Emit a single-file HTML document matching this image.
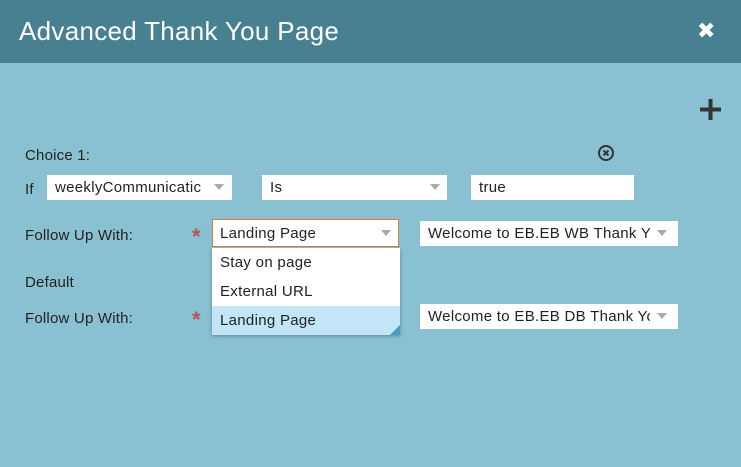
<!DOCTYPE html>
<html><head><style>
*{margin:0;padding:0;box-sizing:border-box}
body{width:741px;height:467px;background:#89c1d3;font-family:"Liberation Sans","DejaVu Sans",sans-serif;position:relative;overflow:hidden;color:#222}
.hdr{position:absolute;left:0;top:0;width:741px;height:63px;background:#478090}
.title{position:absolute;left:19px;top:16px;font-size:26px;color:#fff;letter-spacing:0.3px}
.x{position:absolute;left:697px;top:18px;color:#fff;font-size:22px;font-weight:bold}
.lbl{position:absolute;font-size:15px;color:#222;letter-spacing:0.2px}
.box{position:absolute;background:#fff;height:25px;font-size:15px;padding:4px 8px 0;white-space:nowrap;overflow:hidden;letter-spacing:0.3px}
.box span{display:block;overflow:hidden}
.arr{position:absolute;width:0;height:0;border-left:5px solid transparent;border-right:5px solid transparent;border-top:6px solid #aaa}
.star{position:absolute;color:#c0504d;font-size:22px;font-weight:bold}
.dd{position:absolute;left:212px;top:248px;width:188px;height:86px;background:#fff;box-shadow:0 2px 4px rgba(0,0,0,.3)}
.dd div{height:29px;padding:6px 8px 0;font-size:15px;letter-spacing:0.3px}
</style></head><body>
<div class="hdr"></div>
<div class="title">Advanced Thank You Page</div>
<div class="x">✖</div>
<svg style="position:absolute;left:700px;top:99px" width="21" height="21"><rect x="8.5" y="0" width="4" height="21" fill="#333"/><rect x="0" y="8.5" width="21" height="4" fill="#333"/></svg>
<div class="lbl" style="left:25px;top:147px">Choice 1:</div>
<svg style="position:absolute;left:597px;top:144px" width="18" height="18"><circle cx="9" cy="9" r="7" fill="none" stroke="#333" stroke-width="2"/><path d="M6.5 6.5L11.5 11.5M11.5 6.5L6.5 11.5" stroke="#333" stroke-width="2"/></svg>
<div class="lbl" style="left:25px;top:181px">If</div>
<div class="box" style="left:47px;top:175px;width:185px"><span style="width:153px">weeklyCommunicatic</span></div><div class="arr" style="left:214px;top:184px"></div>
<div class="box" style="left:262px;top:175px;width:185px">Is</div><div class="arr" style="left:430px;top:184px"></div>
<div class="box" style="left:471px;top:175px;width:163px">true</div>
<div class="lbl" style="left:25px;top:227px">Follow Up With:</div>
<div class="star" style="left:192px;top:224px">*</div>
<div class="box" style="left:212px;top:219px;width:187px;border:1px solid #e07b2a;padding:5px 7px 0;height:28px">Landing Page</div><div class="arr" style="left:381px;top:230px"></div>
<div class="box" style="left:420px;top:221px;width:258px"><span style="width:222px">Welcome to EB.EB WB Thank You Page</span></div><div class="arr" style="left:657px;top:230px"></div>
<div class="dd"><div>Stay on page</div><div>External URL</div><div style="background:#c2e6f7;position:relative">Landing Page<span style="position:absolute;right:0;bottom:0;border-left:10px solid transparent;border-bottom:10px solid #4a9ac3"></span></div></div>
<div class="lbl" style="left:25px;top:274px">Default</div>
<div class="lbl" style="left:25px;top:310px">Follow Up With:</div>
<div class="star" style="left:192px;top:307px">*</div>
<div class="box" style="left:420px;top:304px;width:258px"><span style="width:222px">Welcome to EB.EB DB Thank You Page</span></div><div class="arr" style="left:657px;top:313px"></div>
</body></html>
